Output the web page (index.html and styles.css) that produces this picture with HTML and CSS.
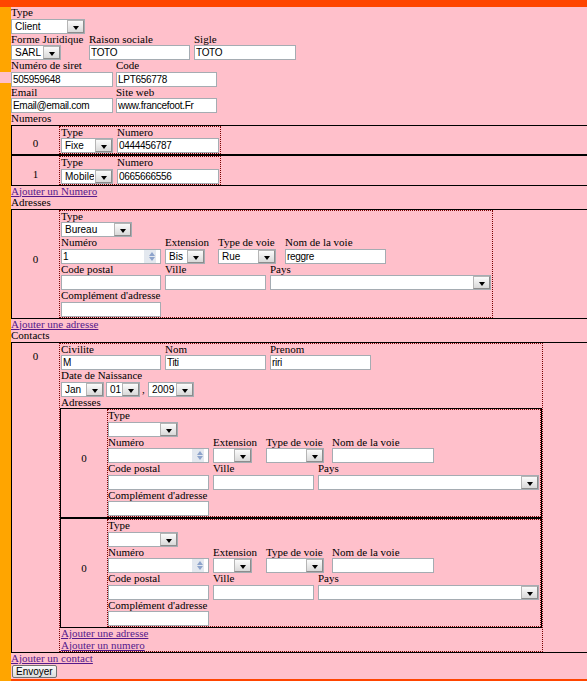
FILE: index.html
```html
<!DOCTYPE html>
<html>
<head>
<meta charset="utf-8">
<title>Client</title>
<link rel="stylesheet" href="styles.css">
</head>
<body>
<div class="topbar"></div>
<div class="page">
  <div class="side"><div class="notch"></div></div>
  <form class="main">
    <div class="frow">
      <div class="field"><label class="lbl">Type</label><span class="sel w74"><select><option>Client</option></select></span></div>
    </div>
    <div class="frow g4">
      <div class="field f74"><label class="lbl">Forme Juridique</label><span class="sel w50"><select><option>SARL</option></select></span></div>
      <div class="field"><label class="lbl">Raison sociale</label><input class="in w101" value="TOTO"></div>
      <div class="field"><label class="lbl">Sigle</label><input class="in w102" value="TOTO"></div>
    </div>
    <div class="frow g3">
      <div class="field"><label class="lbl">Numéro de siret</label><input class="in w102" value="505959648"></div>
      <div class="field"><label class="lbl">Code</label><input class="in w101" value="LPT656778"></div>
    </div>
    <div class="frow g3">
      <div class="field"><label class="lbl">Email</label><input class="in w102" value="Email@email.com"></div>
      <div class="field"><label class="lbl">Site web</label><input class="in w101" value="www.francefoot.Fr"></div>
    </div>

    <div class="lbl">Numeros</div>
    <div class="trow">
      <div class="idx low">0</div>
      <div class="box">
        <div class="frow g4">
          <div class="field"><label class="lbl">Type</label><span class="sel w52"><select><option>Fixe</option></select></span></div>
          <div class="field"><label class="lbl">Numero</label><input class="in w102" value="0444456787"></div>
        </div>
      </div>
    </div>
    <div class="trow">
      <div class="idx low">1</div>
      <div class="box">
        <div class="frow g4">
          <div class="field"><label class="lbl">Type</label><span class="sel w52"><select><option>Mobile</option></select></span></div>
          <div class="field"><label class="lbl">Numero</label><input class="in w102" value="0665666556"></div>
        </div>
      </div>
    </div>
    <a class="lnk" href="#">Ajouter un Numero</a>

    <div class="lbl">Adresses</div>
    <div class="trow">
      <div class="idx high">0</div>
      <div class="box">
        <div class="frow">
          <div class="field"><label class="lbl">Type</label><span class="sel w71"><select><option>Bureau</option></select></span></div>
        </div>
        <div class="frow g4">
          <div class="field"><label class="lbl">Numéro</label><span class="num w100"><input class="in spin w100" value="1"></span></div>
          <div class="field f49"><label class="lbl">Extension</label><span class="sel w40"><select><option>Bis</option></select></span></div>
          <div class="field f63"><label class="lbl">Type de voie</label><span class="sel w58"><select><option>Rue</option></select></span></div>
          <div class="field"><label class="lbl">Nom de la voie</label><input class="in w101" value="reggre"></div>
        </div>
        <div class="frow g4">
          <div class="field"><label class="lbl">Code postal</label><input class="in w100" value=""></div>
          <div class="field"><label class="lbl">Ville</label><input class="in w101" value=""></div>
          <div class="field"><label class="lbl">Pays</label><span class="sel w221"><select><option></option></select></span></div>
        </div>
        <div class="frow">
          <div class="field"><label class="lbl">Complément d'adresse</label><input class="in w100" value=""></div>
        </div>
      </div>
    </div>
    <a class="lnk" href="#">Ajouter une adresse</a>

    <div class="lbl">Contacts</div>
    <div class="trow">
      <div class="idx top">0</div>
      <div class="box cbox">
        <div class="frow g4 pl1">
          <div class="field"><label class="lbl">Civilite</label><input class="in w100" value="M"></div>
          <div class="field"><label class="lbl">Nom</label><input class="in w101" value="Titi"></div>
          <div class="field"><label class="lbl">Prenom</label><input class="in w101" value="riri"></div>
        </div>
        <div class="pl1">
          <label class="lbl">Date de Naissance</label>
          <div class="dates">
            <span class="sel w43"><select><option>Jan</option></select></span>
            <span class="sel w34 ml2"><select><option>01</option></select></span>
            <span class="comma">,</span>
            <span class="sel w46"><select><option>2009</option></select></span>
          </div>
        </div>
        <div class="lbl pl1">Adresses</div>
        <div class="ntable">
          <div class="trow nrow">
            <div class="idx nidx high">0</div>
            <div class="box nbox">
              <div class="frow">
                <div class="field"><label class="lbl">Type</label><span class="sel w70"><select><option></option></select></span></div>
              </div>
              <div class="frow g4">
                <div class="field"><label class="lbl">Numéro</label><span class="num w101"><input class="in spin w101" value=""></span></div>
                <div class="field f49"><label class="lbl">Extension</label><span class="sel w39"><select><option></option></select></span></div>
                <div class="field f62"><label class="lbl">Type de voie</label><span class="sel w58"><select><option></option></select></span></div>
                <div class="field"><label class="lbl">Nom de la voie</label><input class="in w102" value=""></div>
              </div>
              <div class="frow g4">
                <div class="field"><label class="lbl">Code postal</label><input class="in w101" value=""></div>
                <div class="field"><label class="lbl">Ville</label><input class="in w101" value=""></div>
                <div class="field"><label class="lbl">Pays</label><span class="sel w221"><select><option></option></select></span></div>
              </div>
              <div class="frow">
                <div class="field"><label class="lbl">Complément d'adresse</label><input class="in w101" value=""></div>
              </div>
            </div>
          </div>
          <div class="trow nrow">
            <div class="idx nidx high">0</div>
            <div class="box nbox">
              <div class="frow">
                <div class="field"><label class="lbl">Type</label><span class="sel w70"><select><option></option></select></span></div>
              </div>
              <div class="frow g4">
                <div class="field"><label class="lbl">Numéro</label><span class="num w101"><input class="in spin w101" value=""></span></div>
                <div class="field f49"><label class="lbl">Extension</label><span class="sel w39"><select><option></option></select></span></div>
                <div class="field f62"><label class="lbl">Type de voie</label><span class="sel w58"><select><option></option></select></span></div>
                <div class="field"><label class="lbl">Nom de la voie</label><input class="in w102" value=""></div>
              </div>
              <div class="frow g4">
                <div class="field"><label class="lbl">Code postal</label><input class="in w101" value=""></div>
                <div class="field"><label class="lbl">Ville</label><input class="in w101" value=""></div>
                <div class="field"><label class="lbl">Pays</label><span class="sel w221"><select><option></option></select></span></div>
              </div>
              <div class="frow">
                <div class="field"><label class="lbl">Complément d'adresse</label><input class="in w101" value=""></div>
              </div>
            </div>
          </div>
        </div>
        <a class="lnk pl1" href="#">Ajouter une adresse</a>
        <a class="lnk pl1" href="#">Ajouter un numero</a>
      </div>
    </div>
    <a class="lnk" href="#">Ajouter un contact</a>
    <button type="button" class="btn">Envoyer</button>
  </form>
</div>
</body>
</html>
```
FILE: styles.css
```css
html {
  background: #ff4500;
}
body {
  margin: 0;
  background: #ff4500;
  font-family: "Liberation Serif", "Times New Roman", serif;
  font-size: 11px;
  color: #000;
}
.topbar {
  height: 7px;
}
.page {
  display: flex;
  align-items: flex-start;
}
.side {
  width: 11px;
  flex: none;
  align-self: stretch;
  min-height: calc(100vh - 7px);
  background: #ffa500;
}
.notch {
  margin-top: 65px;
  height: 11px;
  background: #ffc0cb;
}
.main {
  flex: 1;
  min-width: 0;
  background: #ffc0cb;
  padding-bottom: 1px;
}
.lbl {
  display: block;
  height: 11.5px;
  line-height: 11.5px;
  white-space: nowrap;
}
.frow {
  display: flex;
  align-items: flex-start;
}
.g3 { gap: 3px; }
.g4 { gap: 4px; }
.pl1 { padding-left: 1px; }
.field {
  display: flex;
  flex-direction: column;
  align-items: flex-start;
  flex: none;
}
.f74 { width: 74px; }
.f49 { width: 49px; }
.f62 { width: 62px; }
.f63 { width: 63px; }

.in {
  display: block;
  box-sizing: border-box;
  height: 15px;
  margin: 0;
  padding: 0 1px;
  border: 1px solid #a5acb2;
  border-radius: 0;
  background: #fff;
  color: #000;
  font: 10px "Liberation Sans", Arial, sans-serif;
  letter-spacing: -0.3px;
  outline: none;
}
.w34 { width: 34px; }
.w39 { width: 39px; }
.w40 { width: 40px; }
.w43 { width: 43px; }
.w46 { width: 46px; }
.w50 { width: 50px; }
.w52 { width: 52px; }
.w58 { width: 58px; }
.w70 { width: 70px; }
.w71 { width: 71px; }
.w74 { width: 74px; }
.w100 { width: 100px; }
.w101 { width: 101px; }
.w102 { width: 102px; }
.w221 { width: 221px; }

/* select with classic drop button */
.sel {
  position: relative;
  display: block;
  height: 15px;
  flex: none;
}
.sel select {
  -webkit-appearance: none;
  appearance: none;
  display: block;
  box-sizing: border-box;
  width: 100%;
  height: 15px;
  margin: 0;
  padding: 0 18px 0 3px;
  border: 1px solid #a5acb2;
  border-radius: 0;
  background: #fff;
  color: #000;
  font: 10px "Liberation Sans", Arial, sans-serif;
  outline: none;
}
.sel::before {
  content: "";
  position: absolute;
  right: 1px;
  top: 1px;
  bottom: 1px;
  width: 17px;
  box-sizing: border-box;
  border: 1px solid #8c8c8c;
  border-top-color: #b5b5b5;
  border-left-color: #b5b5b5;
  background: linear-gradient(#fbfbfb, #d9d9d9);
  pointer-events: none;
}
.sel::after {
  content: "";
  position: absolute;
  right: 6px;
  top: 7px;
  border-style: solid;
  border-width: 4px 3.5px 0;
  border-color: #000 transparent transparent;
  pointer-events: none;
}

/* number input with spinner */
.num {
  position: relative;
  display: block;
  flex: none;
}
.spin {
  background: linear-gradient(#e3e8ef, #e3e8ef) right 4px center / 12px 13px no-repeat, #fff;
}
.num::before,
.num::after {
  content: "";
  position: absolute;
  right: 6px;
  border-style: solid;
  border-color: transparent;
  pointer-events: none;
}
.num::before {
  top: 3px;
  border-width: 0 3.5px 4px;
  border-bottom-color: #8da3cb;
}
.num::after {
  top: 8px;
  border-width: 4px 3.5px 0;
  border-top-color: #8da3cb;
}

/* table-like rows */
.trow {
  display: flex;
  border: 1px solid #000;
  border-right: 0;
}
.idx {
  width: 47px;
  flex: none;
  display: flex;
  align-items: center;
  justify-content: center;
  line-height: 11.5px;
}
.idx.low { padding-top: 8px; box-sizing: border-box; }
.idx.high { padding-bottom: 8px; box-sizing: border-box; }
.idx.top { align-items: flex-start; padding-top: 8px; }
.box {
  border: 1px dotted #7a0000;
  padding: 0 1px;
  flex: none;
}
.cbox {
  padding: 0;
}
.ntable {
  display: flex;
  flex-direction: column;
  align-items: stretch;
}
.nrow {
  border-right: 1px solid #000;
}
.nidx {
  width: 46px;
}
.nbox {
  padding: 0 1px 0 0;
}
.dates {
  display: flex;
  align-items: flex-start;
}
.ml2 { margin-left: 2px; }
.comma {
  display: block;
  width: 8px;
  padding-left: 2px;
  box-sizing: border-box;
  line-height: 15px;
}
.lnk {
  display: block;
  width: max-content;
  height: 11.5px;
  line-height: 11.5px;
  color: #551a8b;
  text-decoration: underline;
  white-space: nowrap;
}
.btn {
  display: block;
  box-sizing: border-box;
  height: 13px;
  margin: 0 0 0 1px;
  padding: 0 3px;
  border: 1px solid #707070;
  border-radius: 2px;
  background: linear-gradient(#fafafa, #dcdcdc);
  color: #000;
  font: 10px "Liberation Sans", Arial, sans-serif;
  line-height: 11px;
}
```
